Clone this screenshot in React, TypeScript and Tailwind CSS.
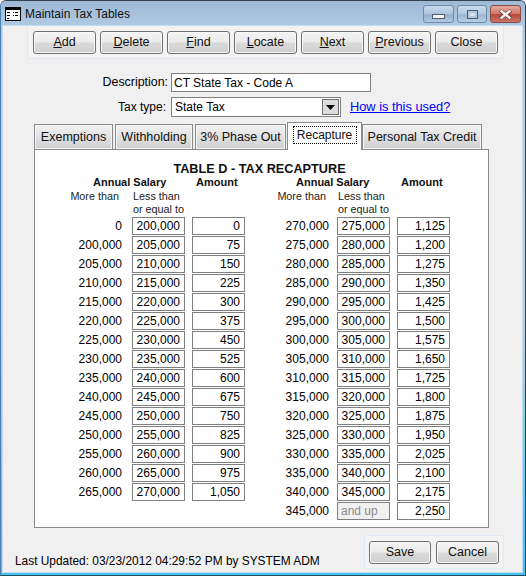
import React from 'react';

const font = { fontFamily: '"Liberation Sans", Arial, sans-serif' };

function fmt(n: number) {
  return n.toLocaleString('en-US');
}

function ToolButton({ label, mark, className }: { label: string; mark?: boolean; className: string }) {
  return (
    <button
      type="button"
      className={`h-[23px] rounded-[3px] border border-[#707070] text-[12.5px] leading-none text-[#111] bg-[linear-gradient(#f4f4f4_0%,#ebebeb_48%,#dadada_52%,#cfcfcf_100%)] shadow-[inset_0_0_0_1px_#f8f8f8] ${className}`}
    >
      {mark ? (
        <>
          <u>{label[0]}</u>
          {label.slice(1)}
        </>
      ) : (
        label
      )}
    </button>
  );
}

function Tab({ label, className }: { label: string; className: string }) {
  return (
    <div
      className={`h-[25px] flex items-center justify-center pt-[1px] border border-b-0 border-[#8a8a8a] text-[12.5px] text-[#111] bg-[linear-gradient(#f2f2f2,#cfcfcf)] shadow-[inset_0_0_0_1px_#f6f6f6] ${className}`}
    >
      {label}
    </div>
  );
}

function Box({ children, muted }: { children: React.ReactNode; muted?: boolean }) {
  return (
    <div
      className={`w-[53px] h-[18px] border border-[#7f7f7f] flex items-center text-[12px] leading-none ${
        muted ? 'bg-[#f0f0f0] text-[#8a8a8a] pl-[3px]' : 'bg-white text-black justify-end pr-[4px]'
      }`}
    >
      {children}
    </div>
  );
}

type Row = { from: number; to: number | null; amount: number };

function TableGroup({ rows, labelGap, annualLeft, className }: { rows: Row[]; labelGap: string; annualLeft: string; className: string }) {
  return (
    <div className={className}>
      <div className="h-[14px] flex text-[11px] font-bold leading-[14px] text-[#111] whitespace-nowrap">
        <div className={annualLeft}>Annual Salary</div>
        <div className="ml-auto w-[53px] pl-[4px]">Amount</div>
      </div>
      <div className="flex text-[10.8px] leading-[13px] text-[#222] whitespace-nowrap">
        <div className="w-[80px] text-right pr-[3px] pt-[1px]">More than</div>
        <div className={`${labelGap} pl-[1px] pt-[1px] h-[28px]`}>
          Less than
          <br />
          or equal to
        </div>
      </div>
      <div className="flex flex-col gap-[1px]">
        {rows.map((r) => (
          <div key={r.from} className="flex items-center h-[18px]">
            <div className="w-[80px] text-right text-[12px] leading-none text-black">{fmt(r.from)}</div>
            <div className={labelGap}>{r.to === null ? <Box muted>and up</Box> : <Box>{fmt(r.to)}</Box>}</div>
            <div className="ml-auto">
              <Box>{fmt(r.amount)}</Box>
            </div>
          </div>
        ))}
      </div>
    </div>
  );
}

export default function App() {
  const left: Row[] = Array.from({ length: 15 }, (_, i) => ({
    from: i === 0 ? 0 : 195000 + i * 5000,
    to: 200000 + i * 5000,
    amount: i * 75,
  }));
  const right: Row[] = Array.from({ length: 16 }, (_, i) => ({
    from: 270000 + i * 5000,
    to: i === 15 ? null : 275000 + i * 5000,
    amount: 1125 + i * 75,
  }));

  return (
    <div
      style={font}
      className="w-[526px] h-[576px] flex flex-col rounded-t-[6px] border border-[#33424f] border-l-[#4a7fae] border-b-[#1f4d63] overflow-hidden bg-[linear-gradient(#a3bfdc_0%,#b6cee7_10%,#b9d1ea_55%,#45c4ee_97%)]"
    >
      <div className="h-[24px] shrink-0 flex items-start bg-[linear-gradient(#9db9d6,#b0c9e3)]">
        <svg width="16" height="14" viewBox="0 0 16 14" className="ml-[4px] mt-[6px]">
          <rect x="0.5" y="0.5" width="15" height="13" fill="#fff" stroke="#000" />
          <rect x="1" y="1" width="14" height="2" fill="#000" />
          <path d="M2 5h3v1H2zM2 8h3v1H2zM2 11h2v1H2zM8 5h1v1H8zM8 8h1v1H8zM10 5h3v1h-3zM10 8h3v1h-3z" fill="#000" />
        </svg>
        <span className="ml-[4px] mt-[5px] text-[12px] leading-[16px] text-[#111]">Maintain Tax Tables</span>
        <div className="ml-auto mr-[4px] mt-[4px] flex gap-[3px]">
          <div className="w-[31px] h-[18px] rounded-[3px] border border-[#6d8aa8] bg-[linear-gradient(#c9daec,#aac3dc_50%,#93afcc_55%,#b3cbe3)] flex items-end justify-center pb-[3px]">
            <div className="w-[13px] h-[5px] bg-[#f4f4f4] border border-[#4a5d72]" />
          </div>
          <div className="w-[30px] h-[18px] rounded-[3px] border border-[#6d8aa8] bg-[linear-gradient(#c9daec,#b0c8e0_50%,#9db7d2_55%,#b6cde4)] flex items-center justify-center">
            <div className="w-[11px] h-[9px] border border-[#4a5d72] bg-[#d6e2ee] shadow-[inset_0_0_0_2px_#b3c8dd]" />
          </div>
          <div className="w-[31px] h-[18px] rounded-[3px] border border-[#8a4a42] bg-[linear-gradient(#e2a99e,#cf7a6c_48%,#b8493a_52%,#c9756a)] flex items-center justify-center">
            <svg width="15" height="11" viewBox="0 0 15 11">
              <path d="M2 1.5 L13 9.5 M13 1.5 L2 9.5" stroke="#5b3430" strokeWidth="3.6" />
              <path d="M2.5 1.5 L12.5 9.5 M12.5 1.5 L2.5 9.5" stroke="#f4f0ee" strokeWidth="2.4" />
            </svg>
          </div>
        </div>
      </div>

      <div className="flex-1 ml-[1px] mr-[2px] mb-[2px] border border-[#c3dcef] bg-[#f0f0f0] flex flex-col">
        <div className="ml-[24px] w-[477px] h-[33px] shrink-0 flex gap-[4px] pl-[5px] pt-[5px] rounded-b-[3px] border border-t-0 border-[#dfe9f3] bg-[#f3f3f3]">
          <ToolButton label="Add" mark className="w-[63px]" />
          <ToolButton label="Delete" mark className="w-[63px]" />
          <ToolButton label="Find" mark className="w-[63px]" />
          <ToolButton label="Locate" mark className="w-[63px]" />
          <ToolButton label="Next" mark className="w-[63px]" />
          <ToolButton label="Previous" mark className="w-[63px]" />
          <ToolButton label="Close" className="w-[63px]" />
        </div>

        <div className="mt-[14px] flex items-center h-[19px]">
          <div className="w-[165px] text-right text-[12.4px] text-black">Description:</div>
          <div className="ml-[3px] w-[200px] h-[19px] border border-[#7f7f7f] bg-white flex items-center pl-[2px] text-[12px] text-black">
            CT State Tax - Code A
          </div>
        </div>

        <div className="mt-[5px] flex items-center h-[20px]">
          <div className="w-[165px] pr-[2px] text-right text-[12px] text-black">Tax type:</div>
          <div className="ml-[3px] w-[170px] h-[20px] border border-[#7f7f7f] bg-white flex items-center pl-[3px] text-[12px] text-black">
            State Tax
            <div className="ml-auto mr-[1px] w-[17px] h-[16px] border border-[#707070] bg-[#dcdcdc] flex items-center justify-center">
              <svg width="9" height="5" viewBox="0 0 9 5">
                <path d="M0 0h9L4.5 5z" fill="#000" />
              </svg>
            </div>
          </div>
          <a href="#" className="ml-[9px] text-[12.8px] text-[#0000ff] underline">
            How is this used?
          </a>
        </div>

        <div className="mt-[5px] ml-[31px] h-[27px] flex items-end shrink-0">
          <Tab label="Exemptions" className="w-[79px]" />
          <Tab label="Withholding" className="w-[78px] ml-[2px]" />
          <Tab label="3% Phase Out" className="w-[91px] ml-[2px]" />
          <div className="relative z-10 -mb-px ml-[1px] w-[75px] h-[28px] bg-white border border-b-0 border-[#8a8a8a] flex items-start justify-center pt-[3px]">
            <div className="w-[64px] h-[18px] border border-dotted border-black flex items-center justify-center text-[12px] text-[#111]">
              Recapture
            </div>
          </div>
          <Tab label="Personal Tax Credit" className="w-[120px]" />
        </div>

        <div className="ml-[31px] w-[455px] h-[379px] shrink-0 border border-[#8a8a8a] bg-white flex flex-col">
          <div className="mt-[12px] h-[13px] pr-[4px] text-center text-[12.7px] font-bold leading-[15px] text-[#111]">
            TABLE D - TAX RECAPTURE
          </div>
          <div className="flex">
            <TableGroup rows={left} labelGap="ml-[10px]" annualLeft="pl-[51px]" className="ml-[7px] w-[203px]" />
            <TableGroup rows={right} labelGap="ml-[8px]" annualLeft="pl-[47px]" className="ml-[4px] w-[201px]" />
          </div>
        </div>

        <div className="mt-[7px] flex-1 flex items-start">
          <div className="ml-[12px] mt-[19px] text-[11.9px] leading-[14px] text-black whitespace-nowrap">
            Last Updated: 03/23/2012 04:29:52 PM by SYSTEM ADM
          </div>
          <div className="ml-auto mr-[18px] w-[140px] h-[34px] flex gap-[5px] pl-[4px] pt-[5px] rounded-[3px] border border-[#dfe9f3] bg-[#f3f3f3]">
            <ToolButton label="Save" className="w-[62px]" />
            <ToolButton label="Cancel" className="w-[63px]" />
          </div>
        </div>
      </div>
    </div>
  );
}
